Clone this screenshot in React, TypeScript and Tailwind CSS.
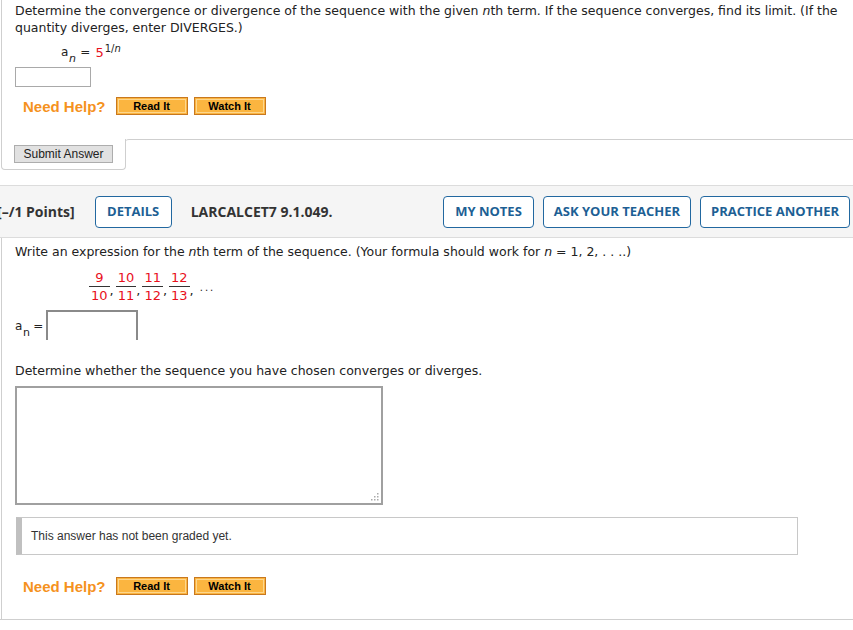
import React from "react";

const verdana = { fontFamily: '"DejaVu Sans", Verdana, sans-serif' };
const arial = { fontFamily: '"Liberation Sans", Arial, sans-serif' };
const openSans = { fontFamily: '"Open Sans", "Liberation Sans", sans-serif' };

function HelpRow() {
  return (
    <div className="flex items-center h-[18px]">
      <span className="ml-[8px] text-[15px] font-bold text-[#f5921e] leading-none" style={arial}>
        Need Help?
      </span>
      <button
        className="ml-[10px] w-[72px] h-[18px] border border-[#c8781f] bg-[#fbb540] p-px flex"
        style={arial}
      >
        <span className="flex-1 border border-[#fdd68e] flex items-center justify-center text-[11px] font-bold text-black leading-none">
          Read It
        </span>
      </button>
      <button
        className="ml-[6px] w-[72px] h-[18px] border border-[#c8781f] bg-[#fbb540] p-px flex"
        style={arial}
      >
        <span className="flex-1 border border-[#fdd68e] flex items-center justify-center text-[11px] font-bold text-black leading-none">
          Watch It
        </span>
      </button>
    </div>
  );
}

function Frac({ n, d }: { n: string; d: string }) {
  return (
    <span className="inline-flex flex-col items-center text-[#e8101c] leading-[13px]">
      <span className="px-[2px]">{n}</span>
      <span className="self-stretch border-t border-[#333] mt-[2px]" />
      <span className="px-[2px] mt-[2px]">{d}</span>
    </span>
  );
}

function Comma() {
  return <span className="self-center mt-[8px] leading-none">,</span>;
}

function HeaderButton({ w, children }: { w: string; children: React.ReactNode }) {
  return (
    <button
      className={`${w} h-[32px] border border-[#2268a0] rounded-[4px] bg-white text-[#1d5f94] text-[13px] font-bold flex items-center justify-center`}
      style={openSans}
    >
      {children}
    </button>
  );
}

export default function App() {
  return (
    <div className="w-[853px] h-[630px] bg-white text-[#222] overflow-hidden" style={verdana}>
      {/* Section 1 */}
      <div className="ml-px border-l border-[#cfcfcf] pl-[13px] pt-[2px] pb-[24px] text-[12.5px] leading-[17px]">
        <p>
          Determine the convergence or divergence of the sequence with the given <i>n</i>th term. If the sequence
          converges, find its limit. (If the quantity diverges, enter DIVERGES.)
        </p>
        <div className="ml-[46px] mt-[8px] h-[18px] flex items-start text-[12px]">
          <span className="relative">
            a<span className="absolute left-[8px] top-[6px] italic text-[11px]">n</span>
          </span>
          <span className="ml-[12px]">=</span>
          <span className="ml-[5px] text-[#e8101c] text-[13px]">5</span>
          <span className="text-[10px] leading-[12px] -mt-[1px] ml-px">
            1/<i>n</i>
          </span>
        </div>
        <div className="mt-[5px] w-[76px] h-[20px] border border-[#a9a9a9] bg-white" />
        <div className="mt-[10px]">
          <HelpRow />
        </div>
      </div>

      {/* Submit tab */}
      <div className="flex">
        <div className="ml-px w-[125px] h-[31px] border-l border-r border-b border-[#cfcfcf] rounded-b-[4px] pl-[12px] pt-[6px] flex items-start">
          <button
            className="w-[99px] h-[18px] bg-[#e1e1e1] border border-[#adadad] text-[12px] text-[#222] leading-none"
            style={arial}
          >
            Submit Answer
          </button>
        </div>
        <div className="flex-1 border-t border-[#cfcfcf] rounded-tl-[4px] -ml-px" />
      </div>

      {/* Section 2 header */}
      <div
        className="mt-[15px] h-[53px] bg-[#f5f5f5] border-t border-b border-[#dcdcdc] flex items-center pr-[3px]"
        style={openSans}
      >
        <span className="-ml-[3px] text-[14px] font-bold text-[#333]">[–/1 Points]</span>
        <div className="ml-[20px]">
          <HeaderButton w="w-[77px]">DETAILS</HeaderButton>
        </div>
        <span className="ml-[19px] text-[14px] font-bold text-[#333]">LARCALCET7 9.1.049.</span>
        <div className="ml-auto flex gap-[9px]">
          <HeaderButton w="w-[91px]">MY NOTES</HeaderButton>
          <HeaderButton w="w-[148px]">ASK YOUR TEACHER</HeaderButton>
          <HeaderButton w="w-[150px]">PRACTICE ANOTHER</HeaderButton>
        </div>
      </div>

      {/* Section 2 body */}
      <div className="border-b border-[#cfcfcf]">
        <div className="ml-px border-l border-[#cfcfcf] pl-[13px] pt-[5px] pb-[24px] text-[12.5px] leading-[17px]">
          <p>
            Write an expression for the <i>n</i>th term of the sequence. (Your formula should work for <i>n</i> = 1, 2,
            . . ..)
          </p>
          <div className="ml-[74px] mt-[11px] flex items-stretch text-[13px]">
            <Frac n="9" d="10" />
            <Comma />
            <span className="ml-[2px] flex"><Frac n="10" d="11" /></span>
            <Comma />
            <span className="ml-[2px] flex"><Frac n="11" d="12" /></span>
            <Comma />
            <span className="ml-[2px] flex"><Frac n="12" d="13" /></span>
            <Comma />
            <span className="ml-[6px] self-center mt-[2px] text-[10px] tracking-[2px]">...</span>
          </div>
          <div className="mt-[8px] flex items-start">
            <span className="relative mt-[8px] text-[12px]">
              a<span className="absolute left-[8px] top-[6px] text-[11px]">n</span>
            </span>
            <span className="ml-[11px] mt-[8px] text-[12px]">=</span>
            <div className="ml-[3px] w-[92px] h-[30px] border-t-2 border-l-2 border-r-2 border-[#8a8a8a] bg-white" />
          </div>
          <p className="mt-[22px]">Determine whether the sequence you have chosen converges or diverges.</p>
          <div className="relative mt-[7px] w-[368px] h-[119px] border-2 border-[#a0a0a0] bg-white">
            <svg className="absolute right-[2px] bottom-[2px]" width="8" height="8" viewBox="0 0 8 8">
              <rect x="6" y="0" width="1.5" height="1.5" fill="#aaa" />
              <rect x="3" y="3" width="1.5" height="1.5" fill="#aaa" />
              <rect x="6" y="3" width="1.5" height="1.5" fill="#aaa" />
              <rect x="0" y="6" width="1.5" height="1.5" fill="#aaa" />
              <rect x="3" y="6" width="1.5" height="1.5" fill="#aaa" />
              <rect x="6" y="6" width="1.5" height="1.5" fill="#aaa" />
            </svg>
          </div>
          <div
            className="mt-[12px] ml-px w-[782px] h-[38px] border border-[#c8c8c8] border-l-[6px] border-l-[#c0c0c0] flex items-center pl-[9px] text-[12px] text-[#333]"
            style={arial}
          >
            This answer has not been graded yet.
          </div>
          <div className="mt-[22px]">
            <HelpRow />
          </div>
        </div>
      </div>
    </div>
  );
}
